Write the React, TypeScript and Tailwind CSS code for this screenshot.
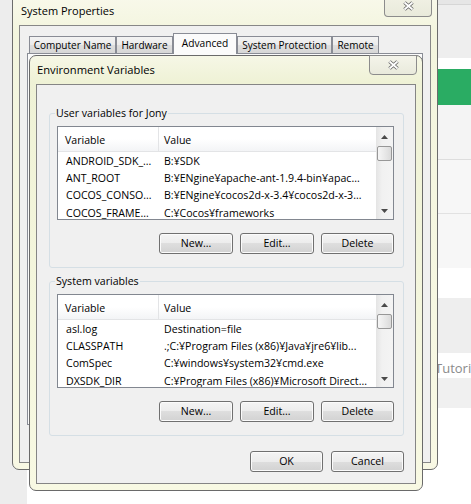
import React from 'react';

type Row = [string, string];

const userRows: Row[] = [
  ['ANDROID_SDK_...', 'B:¥SDK'],
  ['ANT_ROOT', 'B:¥ENgine¥apache-ant-1.9.4-bin¥apac...'],
  ['COCOS_CONSO...', 'B:¥ENgine¥cocos2d-x-3.4¥cocos2d-x-3...'],
  ['COCOS_FRAME...', 'C:¥Cocos¥frameworks'],
];

const systemRows: Row[] = [
  ['asl.log', 'Destination=file'],
  ['CLASSPATH', '.;C:¥Program Files (x86)¥Java¥jre6¥lib...'],
  ['ComSpec', 'C:¥windows¥system32¥cmd.exe'],
  ['DXSDK_DIR', 'C:¥Program Files (x86)¥Microsoft Direct...'],
];

const CloseGlyph = () => (
  <svg width="13" height="10" viewBox="0 0 13 10">
    <path d="M2.5 1.5 L10.5 8.5 M10.5 1.5 L2.5 8.5" stroke="#6a6a6a" strokeWidth="3.6" fill="none" />
    <path d="M2.5 1.5 L10.5 8.5 M10.5 1.5 L2.5 8.5" stroke="#ffffff" strokeWidth="1.7" fill="none" />
  </svg>
);

const Button = ({ label, className }: { label: string; className: string }) => (
  <button
    className={`h-[21px] ${className} rounded-[3px] border border-[#707070] bg-[linear-gradient(to_bottom,#f4f4f4_0%,#ececec_50%,#dedede_50%,#d2d2d2_100%)] shadow-[inset_0_0_0_1px_#fbfbfb] text-black leading-none`}
  >
    {label}
  </button>
);

const Scrollbar = () => (
  <div className="w-[17px] shrink-0 flex flex-col bg-[linear-gradient(to_right,#e4e4e4,#f1f1f1_35%,#f4f4f4)]">
    <div className="h-[19px] flex items-center justify-center">
      <svg width="7" height="4" viewBox="0 0 7 4">
        <path d="M0 4 L3.5 0 L7 4 Z" fill="#4a4a4a" />
      </svg>
    </div>
    <div className="mx-[1px] h-[15px] rounded-[2px] border border-[#979797] bg-[linear-gradient(to_right,#f6f6f6,#e6e6e6_60%,#dadada)]" />
    <div className="flex-1" />
    <div className="h-[17px] flex items-center justify-center">
      <svg width="7" height="4" viewBox="0 0 7 4">
        <path d="M0 0 L3.5 4 L7 0 Z" fill="#4a4a4a" />
      </svg>
    </div>
  </div>
);

const ListView = ({ rows }: { rows: Row[] }) => (
  <div className="flex h-[94px] w-[337px] border border-[#828790] bg-white overflow-hidden">
    <div className="flex-1 min-w-0 flex flex-col">
      <div className="flex h-[25px] shrink-0 border-b border-[#e3e4e6] bg-[linear-gradient(to_bottom,#ffffff,#ffffff_50%,#f3f4f6)]">
        <div className="w-[101px] flex items-center pt-[3px] pl-[7px] border-r border-[#e3e4e6]">Variable</div>
        <div className="flex items-center pt-[3px] pl-[5px]">Value</div>
      </div>
      <div className="pt-[1px]">
        {rows.map(([k, v]) => (
          <div key={k} className="flex h-[17.3px] items-center whitespace-nowrap">
            <div className="w-[101px] pl-[8px]">{k}</div>
            <div className="pl-[5px]">{v}</div>
          </div>
        ))}
      </div>
    </div>
    <Scrollbar />
  </div>
);

const GroupBox = ({ label, rows, className }: { label: string; rows: Row[]; className: string }) => (
  <div className={`relative h-[155px] w-[355px] ${className} border border-[#d5dfe5] rounded-[3px] pt-[12px] pl-[7px]`}>
    <span className="absolute left-[5px] top-[-9px] px-[1px] bg-[#f0f0f0] leading-[16px]">{label}</span>
    <ListView rows={rows} />
    <div className="w-[337px] mt-[13px] flex justify-end gap-[7px]">
      <Button label="New..." className="w-[74px]" />
      <Button label="Edit..." className="w-[74px]" />
      <Button label="Delete" className="w-[73px]" />
    </div>
  </div>
);

const Tab = ({ label, className, active }: { label: string; className: string; active?: boolean }) =>
  active ? (
    <div className={`${className} h-[21px] -mb-[1px] relative z-10 border border-b-0 border-[#898c95] bg-[#fbfbfb] flex justify-center pt-[2px] whitespace-nowrap text-[10.2px]`}>
      {label}
    </div>
  ) : (
    <div className={`${className} h-[17px] border border-b-0 border-[#898c95] bg-[linear-gradient(to_bottom,#f3f3f3,#ebebeb_50%,#dedede_50%,#d7d7d7)] flex items-center justify-center whitespace-nowrap text-[10px]`}>
      {label}
    </div>
  );

export default function App() {
  return (
    <div className="relative w-[471px] h-[504px] overflow-hidden bg-white font-['Open_Sans','Segoe_UI',sans-serif] text-[10.6px] text-black">
      {/* page behind the dialogs */}
      <div className="flex h-full">
        <div className="w-[27px] shrink-0 h-full bg-[#ededed]" />
        <div className="flex-1 min-w-0 flex flex-col">
          <div className="h-[5px] bg-[#e6e6e6] border-b border-[#d6d6d6]" />
          <div className="h-[53px] bg-[#eeeeee]" />
          <div className="h-[11px] bg-white" />
          <div className="h-[36px] bg-[#2aac63]" />
          <div className="h-[55px] bg-[#f4f4f4] border-b border-[#dddddd]" />
          <div className="h-[54px] bg-[#f7f7f7] border-b border-[#e2e2e2]" />
          <div className="h-[54px] bg-[#f7f7f7]" />
          <div className="h-[30px] bg-white" />
          <div className="h-[55px] bg-[#eeeeee]" />
          <div className="h-[25px] bg-white pl-[408px] leading-[31px] whitespace-nowrap overflow-hidden text-[13px] text-[#8a8a8a]">
            Tutorials
          </div>
          <div className="h-[30px] bg-[#f0f0f0]" />
        </div>
      </div>

      {/* System Properties */}
      <div className="absolute left-[12px] top-[-8px] w-[426px] h-[478px] rounded-[7px] border border-[#6c6c6c] bg-[linear-gradient(to_bottom,#f9f9ec,#f3f5de_40px,#f8f8e4)] flex flex-col px-[6px] pb-[6px]">
        <div className="h-[32px] flex justify-between items-start">
          <span className="mt-[10px] ml-[2px] leading-[16px] text-[11px]">System Properties</span>
          <div className="w-[48px] h-[24px] -mr-[1px] rounded-b-[4px] border border-t-0 border-[#8c8c8c] bg-[linear-gradient(to_bottom,#f2f2e6,#e9eadb)] flex items-end justify-center pb-[5px]">
            <CloseGlyph />
          </div>
        </div>
        <div className="flex-1 border border-[#878787] bg-[#f0f0f0] flex flex-col">
          <div className="flex items-end h-[20px] ml-[9px] mt-[7px] relative z-10">
            <Tab label="Computer Name" className="w-[87px]" />
            <Tab label="Hardware" className="w-[57px]" />
            <Tab label="Advanced" className="w-[64px]" active />
            <Tab label="System Protection" className="w-[95px]" />
            <Tab label="Remote" className="w-[47px]" />
          </div>
          <div className="mx-[7px] h-[372px] border border-[#898c95] bg-[#fbfbfb]" />
        </div>
      </div>

      {/* Environment Variables */}
      <div className="absolute left-[29px] top-[55px] w-[394px] h-[436px] rounded-[7px] border border-[#6a6a6a] bg-[linear-gradient(to_bottom,#f6f7e6,#eff2d6_26px,#f8f9e3)] flex flex-col px-[6px] pb-[6px]">
        <div className="h-[28px] flex justify-between items-start">
          <span className="mt-[6px] ml-[1px] leading-[16px] text-[11.2px]">Environment Variables</span>
          <div className="w-[48px] h-[20px] -mt-[1px] -mr-[1px] rounded-b-[4px] border border-[#8c8c8c] bg-[linear-gradient(to_bottom,#f4f4ea,#e9eadc)] flex items-center justify-center">
            <CloseGlyph />
          </div>
        </div>
        <div className="flex-1 border border-[#858585] bg-[#f0f0f0] flex flex-col pl-[12px]">
          <GroupBox label="User variables for Jony" rows={userRows} className="mt-[28px]" />
          <GroupBox label="System variables" rows={systemRows} className="mt-[13px]" />
          <div className="w-[355px] mt-[15px] flex justify-end gap-[8px]">
            <Button label="OK" className="w-[73px]" />
            <Button label="Cancel" className="w-[73px]" />
          </div>
        </div>
      </div>
    </div>
  );
}
